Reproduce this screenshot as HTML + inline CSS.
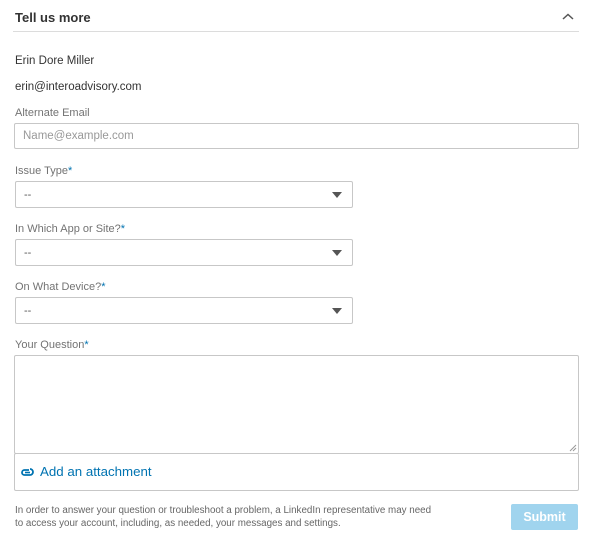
<!DOCTYPE html>
<html><head><meta charset="utf-8"><style>
body{margin:0;background:#fff;font-family:"Liberation Sans",sans-serif;color:#333;width:600px;height:539px;position:relative;overflow:hidden}
.a{position:absolute;white-space:nowrap}
.lbl{font-size:11px;color:#737373}
.lbl b{color:#0073b1;font-weight:normal}
.box{position:absolute;border:1px solid #c7c7c7;border-radius:2px;box-sizing:border-box;background:#fff}
.sel{left:15px;width:338px;height:27px}
.sel span{position:absolute;left:8px;top:7px;font-size:11px;color:#555}
.sel i{position:absolute;right:10px;top:10px;width:0;height:0;border-left:5px solid transparent;border-right:5px solid transparent;border-top:6px solid #555}
</style></head><body>
<div class="a" style="left:15px;top:10px;font-size:13px;font-weight:bold;color:#333">Tell us more</div>
<svg class="a" style="left:562px;top:13px" width="12" height="8"><path d="M1 6 L6 1.5 L11 6" fill="none" stroke="#555" stroke-width="1.5"/></svg>
<div class="a" style="left:13px;top:31px;width:566px;height:1px;background:#dcdcdc"></div>
<div class="a" style="left:15px;top:55px;font-size:11.5px;color:#333">Erin Dore Miller</div>
<div class="a" style="left:15px;top:81px;font-size:11.5px;color:#333">erin@interoadvisory.com</div>
<div class="a lbl" style="left:15px;top:107px">Alternate Email</div>
<div class="box" style="left:14px;top:123px;width:565px;height:26px"><span class="a" style="left:8px;top:6px;font-size:11.5px;color:#999">Name@example.com</span></div>
<div class="a lbl" style="left:15px;top:165px">Issue Type<b>*</b></div>
<div class="box sel" style="top:181px"><span>--</span><i></i></div>
<div class="a lbl" style="left:15px;top:223px">In Which App or Site?<b>*</b></div>
<div class="box sel" style="top:239px"><span>--</span><i></i></div>
<div class="a lbl" style="left:15px;top:281px">On What Device?<b>*</b></div>
<div class="box sel" style="top:297px"><span>--</span><i></i></div>
<div class="a lbl" style="left:15px;top:339px">Your Question<b>*</b></div>
<div class="box" style="left:14px;top:355px;width:565px;height:99px"></div>
<svg class="a" style="left:569px;top:444px" width="8" height="8"><path d="M1 7 L7 1 M4 7 L7 4" stroke="#999" stroke-width="1"/></svg>
<div class="box" style="left:14px;top:453px;width:565px;height:38px;border-top:1px solid #c7c7c7"></div>
<svg class="a" style="left:20px;top:467px" width="15" height="11"><path d="M9 3 H4.5 a2.5 2.5 0 0 0 0 5 H10 a3 3 0 0 0 0-6" fill="none" stroke="#0073b1" stroke-width="1.8"/><path d="M5 5.5 H10" stroke="#0073b1" stroke-width="1.6"/></svg>
<div class="a" style="left:40px;top:464px;font-size:13.3px;color:#0073b1">Add an attachment</div>
<div class="a" style="left:15px;top:504px;font-size:9.8px;color:#666;line-height:13px">In order to answer your question or troubleshoot a problem, a LinkedIn representative may need<br>to access your account, including, as needed, your messages and settings.</div>
<div class="a" style="left:511px;top:504px;width:67px;height:26px;background:#a0d4ee;border-radius:2px;color:#fff;font-weight:bold;font-size:12.5px;text-align:center;line-height:26px">Submit</div>
</body></html>
